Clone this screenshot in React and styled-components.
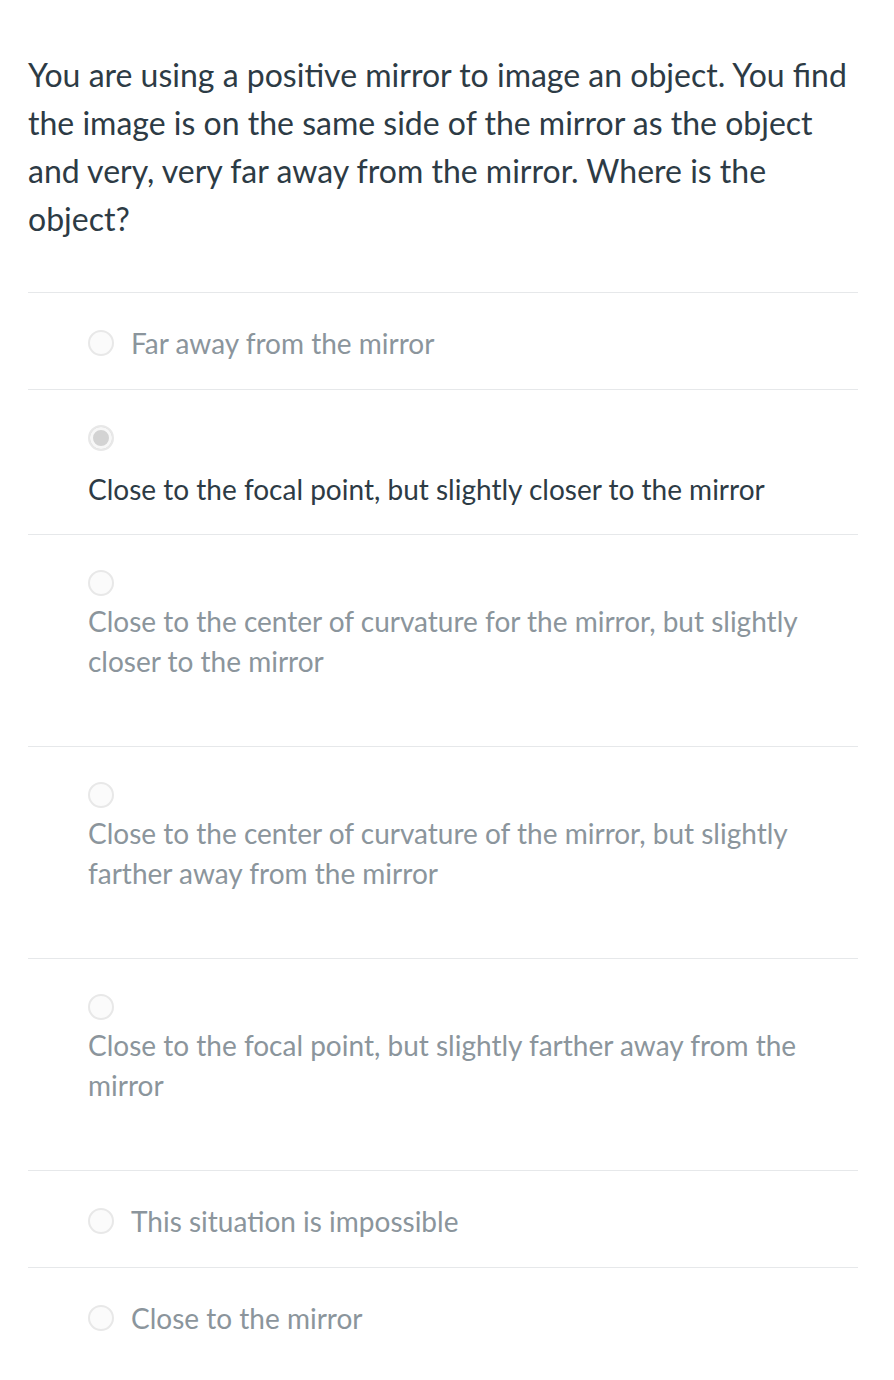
import React from "react";
import styled, { createGlobalStyle } from "styled-components";

const Global = createGlobalStyle`
  html, body { margin: 0; padding: 0; background: #ffffff; }
  body { font-family: Lato, "Open Sans", sans-serif; -webkit-font-smoothing: antialiased; }
`;

const Page = styled.div`
  padding: 51px 36px 40px 28px;
`;

const Question = styled.div`
  font-size: 32px;
  line-height: 48px;
  color: #2d3b45;
  margin: 0 0 49px 0;
`;

const Answers = styled.div`
  display: flex;
  flex-direction: column;
`;

const Row = styled.label`
  display: flex;
  flex-direction: ${(p) => (p.$stacked ? "column" : "row")};
  align-items: ${(p) => (p.$stacked ? "flex-start" : "center")};
  gap: ${(p) => (p.$stacked ? p.$gap : 17)}px;
  border-top: 1px solid #e6e8ea;
  padding: ${(p) => (p.$stacked ? `35px 20px ${p.$bottom}px 60px` : "30px 20px 26px 60px")};
`;

const Radio = styled.span`
  box-sizing: border-box;
  flex: none;
  width: 26px;
  height: 26px;
  border-radius: 50%;
  border: 2px solid #e8e8e8;
  background: ${(p) => (p.$checked ? "#d3d3d3" : "#fbfbfb")};
  box-shadow: ${(p) => (p.$checked ? "inset 0 0 0 3px #f7f7f7" : "none")};
`;

const Text = styled.span`
  font-size: 28px;
  line-height: 40px;
  color: ${(p) => (p.$checked ? "#2d3b45" : "#8b959c")};
`;

const options = [
  { text: "Far away from the mirror" },
  { text: "Close to the focal point, but slightly closer to the mirror", stacked: true, checked: true, gap: 18, bottom: 25 },
  { text: "Close to the center of curvature for the mirror, but slightly closer to the mirror", stacked: true, gap: 5, bottom: 65 },
  { text: "Close to the center of curvature of the mirror, but slightly farther away from the mirror", stacked: true, gap: 5, bottom: 65 },
  { text: "Close to the focal point, but slightly farther away from the mirror", stacked: true, gap: 5, bottom: 65 },
  { text: "This situation is impossible" },
  { text: "Close to the mirror" },
];

export default function App() {
  return (
    <>
      <Global />
      <Page>
        <Question>
          You are using a positive mirror to image an object. You find the image is on the same side of the
          mirror as the object and very, very far away from the mirror. Where is the object?
        </Question>
        <Answers>
          {options.map((o, i) => (
            <Row key={i} $stacked={o.stacked} $gap={o.gap} $bottom={o.bottom}>
              <Radio $checked={o.checked} />
              <Text $checked={o.checked}>{o.text}</Text>
            </Row>
          ))}
        </Answers>
      </Page>
    </>
  );
}
